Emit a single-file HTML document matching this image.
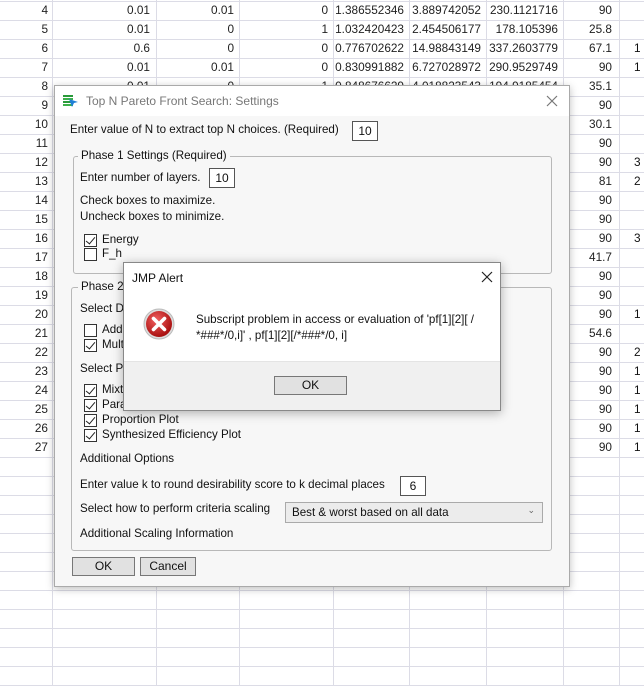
<!DOCTYPE html>
<html><head><meta charset="utf-8"><style>
*{margin:0;padding:0;box-sizing:border-box}
body{width:644px;height:686px;overflow:hidden;background:#fff;font-family:"Liberation Sans",sans-serif;font-size:12px;color:#111;position:relative}
.a{position:absolute;white-space:nowrap}
.h{position:absolute;left:0;width:644px;height:1px;background:#dcdce6}
.v{position:absolute;top:0;height:686px;width:1px;background:#dcdce6}
.n{position:absolute;text-align:right;font-size:11.8px;line-height:19px;color:#222}
.cb{position:absolute;width:13px;height:13px;border:1px solid #333;background:#fff}
.cb.k::after{content:"";position:absolute;left:3px;top:0px;width:4px;height:8px;border:solid #222;border-width:0 1.5px 1.5px 0;transform:rotate(40deg)}
.box{position:absolute;border:1px solid #555;background:#fff;text-align:center;line-height:18px;font-size:12px}
.btn{position:absolute;border:1px solid #777;background:#e1e1e1;text-align:center;line-height:16px;font-size:12px}
.grp{position:absolute;border:1px solid #b8b8b8;border-radius:3px}
.lbl{position:absolute;background:#f7f7f7;padding:0 3px;font-size:11.6px}
.t{font-size:11.6px}
</style></head><body>
<div id="grid"></div>
<script>
(function(){
var g=document.getElementById('grid'),h='';
for(var y=1;y<686;y+=19)h+='<div class="h" style="top:'+y+'px"></div>';
[52,156,239,333,409,486,563,619].forEach(function(x){h+='<div class="v" style="left:'+x+'px"></div>'});
var rows=[["0.01","0.01","0","1.386552346","3.889742052","230.1121716","90",""],
["0.01","0","1","1.032420423","2.454506177","178.105396","25.8",""],
["0.6","0","0","0.776702622","14.98843149","337.2603779","67.1","1"],
["0.01","0.01","0","0.830991882","6.727028972","290.9529749","90","1"],
["0.01","0","1","0.848676629","4.018823543","194.9185454","35.1",""]];
var H=["90","30.1","90","90","81","90","90","90","41.7","90","90","90","54.6","90","90","90","90","90","90"];
var I=["","","","3","2","","","3","","","","1","","2","1","1","1","1","1"];
var R=[48,150,234,328,404,481,558,612];
for(var r=0;r<24;r++){var tp=1+r*19;h+='<div class="n" style="top:'+tp+'px;left:0;width:'+R[0]+'px">'+(r+4)+'</div>';
 var d=r<5?rows[r]:["","","","","","",H[r-5],I[r-5]];
 for(var c=0;c<7;c++)if(d[c])h+='<div class="n" style="top:'+tp+'px;left:0;width:'+R[c+1]+'px">'+d[c]+'</div>';
 if(d[7])h+='<div class="a" style="top:'+tp+'px;left:634px;line-height:19px;font-size:11.8px">'+d[7]+'</div>';}
g.innerHTML=h;
})();
</script>
<!-- settings dialog -->
<div class="a" style="left:54px;top:85px;width:516px;height:502px;background:#f7f7f7;border:1px solid #aaa;box-shadow:0 2px 8px rgba(0,0,0,.25)">
 <div class="a" style="left:0;top:0;width:514px;height:30px;background:#fff"></div>
 <svg class="a" style="left:8px;top:8px" width="16" height="14" viewBox="0 0 16 14"><rect x="0" y="1" width="10" height="2" fill="#2a9a3a"/><rect x="0" y="4" width="10" height="2" fill="#3cb04a"/><rect x="0" y="7" width="10" height="2" fill="#2a9a3a"/><rect x="0" y="10" width="10" height="2" fill="#3cb04a"/><path d="M6 5 L15 8 L11 9 L9 13 Z" fill="#1e7fd6"/></svg>
 <div class="a" style="left:31px;top:8px;font-size:12px;color:#777">Top N Pareto Front Search: Settings</div>
 <svg class="a" style="left:491px;top:9px" width="12" height="12"><path d="M1 1L11 11M11 1L1 11" stroke="#777" stroke-width="1.2"/></svg>
</div>
<div class="a t" style="left:70px;top:123px">Enter value of N to extract top N choices. (Required)</div>
<div class="box" style="left:352px;top:121px;width:26px;height:20px">10</div>
<div class="grp" style="left:73px;top:156px;width:479px;height:118px"></div>
<div class="lbl" style="left:78px;top:149px">Phase 1 Settings (Required)</div>
<div class="a t" style="left:80px;top:171px">Enter number of layers.</div>
<div class="box" style="left:209px;top:168px;width:26px;height:20px">10</div>
<div class="a t" style="left:80px;top:194px">Check boxes to maximize.</div>
<div class="a t" style="left:80px;top:210px">Uncheck boxes to minimize.</div>
<div class="cb k" style="left:84px;top:234px"></div><div class="a t" style="left:102px;top:233px">Energy</div>
<div class="cb" style="left:84px;top:248px"></div><div class="a t" style="left:102px;top:247px">F_h</div>
<div class="grp" style="left:71px;top:287px;width:481px;height:264px"></div>
<div class="lbl" style="left:78px;top:280px">Phase 2 Settings</div>
<div class="a t" style="left:80px;top:302px">Select Desirability</div>
<div class="cb" style="left:84px;top:324px"></div><div class="a t" style="left:102px;top:323px">Additive</div>
<div class="cb k" style="left:84px;top:339px"></div><div class="a t" style="left:102px;top:338px">Multiplicative</div>
<div class="a t" style="left:80px;top:362px">Select Plots</div>
<div class="cb k" style="left:84px;top:384px"></div><div class="a t" style="left:102px;top:383px">Mixture Plot</div>
<div class="cb k" style="left:84px;top:399px"></div><div class="a t" style="left:102px;top:398px">Parallel Plot</div>
<div class="cb k" style="left:84px;top:414px"></div><div class="a t" style="left:102px;top:413px">Proportion Plot</div>
<div class="cb k" style="left:84px;top:429px"></div><div class="a t" style="left:102px;top:428px">Synthesized Efficiency Plot</div>
<div class="a t" style="left:80px;top:452px">Additional Options</div>
<div class="a t" style="left:80px;top:478px">Enter value k to round desirability score to k decimal places</div>
<div class="box" style="left:400px;top:476px;width:26px;height:20px">6</div>
<div class="a t" style="left:80px;top:502px">Select how to perform criteria scaling</div>
<div class="a t" style="left:285px;top:502px;width:258px;height:21px;border:1px solid #aaa;background:#ececec;padding:3px 0 0 6px">Best &amp; worst based on all data<span style="position:absolute;right:7px;top:2px;font-size:9px;color:#666">&#8964;</span></div>
<div class="a t" style="left:80px;top:527px">Additional Scaling Information</div>
<div class="btn" style="left:72px;top:557px;width:63px;height:19px">OK</div>
<div class="btn" style="left:140px;top:557px;width:56px;height:19px">Cancel</div>
<!-- alert -->
<div class="a" style="left:123px;top:262px;width:378px;height:149px;background:#fff;border:1px solid #888;box-shadow:0 2px 10px rgba(0,0,0,.3)">
 <div class="a" style="left:0;top:98px;width:376px;height:49px;background:#f0f0f0;border-top:1px solid #e4e4e4"></div>
 <div class="a" style="left:8px;top:8px;font-size:12px;color:#111">JMP Alert</div>
 <svg class="a" style="left:357px;top:8px" width="12" height="12"><path d="M1 1L11 11M11 1L1 11" stroke="#222" stroke-width="1.2"/></svg>
 <svg class="a" style="left:19px;top:45px" width="32" height="32" viewBox="0 0 32 32"><defs><radialGradient id="rg" cx="40%" cy="35%" r="65%"><stop offset="0" stop-color="#f26060"/><stop offset="1" stop-color="#a80f0f"/></radialGradient></defs><circle cx="16" cy="16" r="15" fill="#ddd" stroke="#bbb"/><circle cx="16" cy="16" r="13" fill="url(#rg)"/><path d="M10.5 10.5 L21.5 21.5 M21.5 10.5 L10.5 21.5" stroke="#fff" stroke-width="3.6" stroke-linecap="round"/></svg>
 <div class="a t" style="left:72px;top:49px;line-height:16px">Subscript problem in access or evaluation of 'pf[1][2][ /<br>*###*/0,i]' , pf[1][2][/*###*/0, i]</div>
 <div class="btn" style="left:150px;top:113px;width:73px;height:19px;border-color:#777">OK</div>
</div>
</body></html>
